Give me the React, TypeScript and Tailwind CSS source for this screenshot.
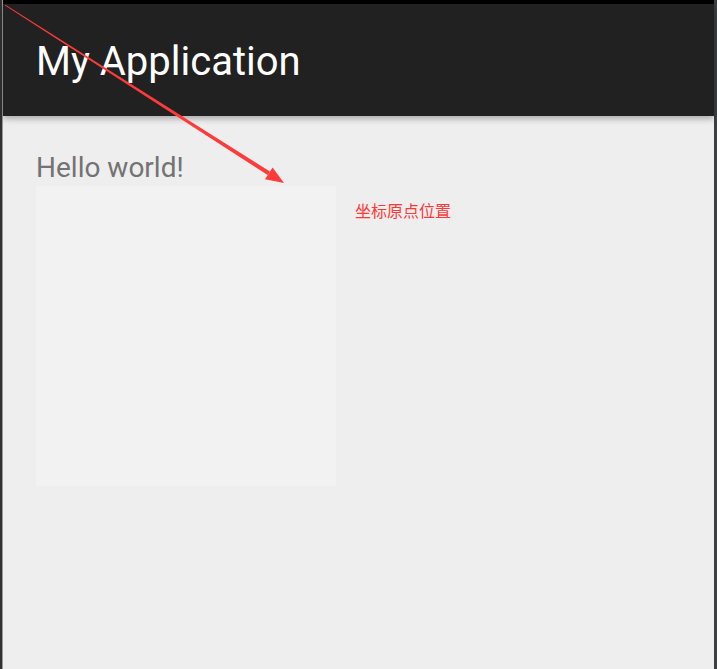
export default function App() {
  return (
    <div
      className="relative flex h-[669px] w-[717px] overflow-hidden bg-[#eeeeee]"
      style={{ fontFamily: 'Roboto, "Noto Sans CJK SC", sans-serif' }}
    >
      {/* window frame, left */}
      <div className="flex h-full w-[3px] shrink-0">
        <div className="h-full w-[2px] bg-[#2f3133]" />
        <div className="h-full w-[1px] bg-[#9a9a9a]" />
      </div>

      <div className="flex h-full flex-1 flex-col">
        <div className="h-[4px] bg-black" />
        <header className="relative z-10 flex h-[112px] items-center bg-[#212121] pl-[33px] shadow-[0_3px_6px_rgba(0,0,0,0.28)]">
          <h1 className="mt-[4px] text-[40px] leading-none font-normal text-white">My Application</h1>
        </header>

        <main className="flex flex-1 flex-col pl-[33px] pt-[34px]">
          <p className="text-[28px] leading-[36px] text-[#737373]">Hello world!</p>
          <div className="flex">
            <div className="h-[300px] w-[300px] bg-[#f2f2f2]" />
            <span
              className="ml-[19px] mt-[13px] text-[16px] leading-[22px] text-[#ff3838]"
              style={{ fontFamily: '"Noto Sans CJK SC", sans-serif' }}
            >
              坐标原点位置
            </span>
          </div>
        </main>
      </div>

      {/* window frame, right */}
      <div className="h-full w-[3px] shrink-0 bg-[#3c3f41]" />

      {/* annotation arrow */}
      <svg className="pointer-events-none absolute left-0 top-0 z-20" width="717" height="669" viewBox="0 0 717 669">
        <polygon fill="#ff3a3a" points="5,4.6 5,5.4 267.7,175.0 269.9,171.6" />
        <polygon fill="#ff3a3a" points="265,179.2 284,183 272.6,167.4" />
      </svg>
    </div>
  );
}
